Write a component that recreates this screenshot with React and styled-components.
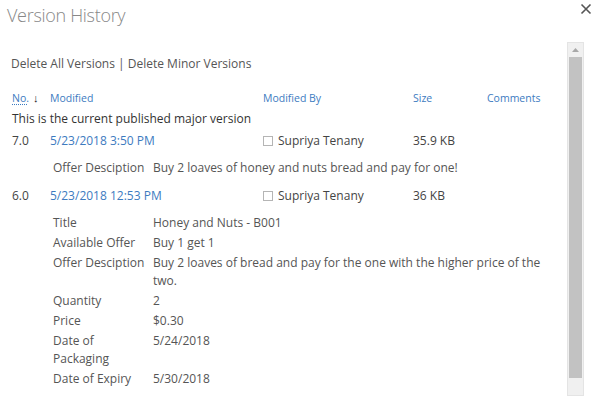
import React from "react";
import styled, { createGlobalStyle } from "styled-components";

const GlobalStyle = createGlobalStyle`
  html, body { margin: 0; padding: 0; background: #fff; }
  body { font-family: "Open Sans", "Liberation Sans", sans-serif; color: #444; }
`;

const versions = [
  {
    no: "7.0",
    date: "5/23/2018 3:50 PM",
    by: "Supriya Tenany",
    size: "35.9 KB",
    fields: [
      ["Offer Desciption", "Buy 2 loaves of honey and nuts bread and pay for one!"],
    ],
  },
  {
    no: "6.0",
    date: "5/23/2018 12:53 PM",
    by: "Supriya Tenany",
    size: "36 KB",
    fields: [
      ["Title", "Honey and Nuts - B001"],
      ["Available Offer", "Buy 1 get 1"],
      ["Offer Desciption", "Buy 2 loaves of bread and pay for the one with the higher price of the two."],
      ["Quantity", "2"],
      ["Price", "$0.30"],
      ["Date of Packaging", "5/24/2018"],
      ["Date of Expiry", "5/30/2018"],
    ],
  },
];

const Dialog = styled.div`
  width: 600px;
  height: 396px;
  display: flex;
  flex-direction: column;
  overflow: hidden;
`;

const Header = styled.div`
  height: 42px;
  display: flex;
  justify-content: space-between;
  align-items: flex-start;
  padding: 0 8px 0 7px;
`;

const Title = styled.h1`
  margin: 3px 0 0;
  font-size: 18px;
  font-weight: 300;
  color: #888;
  letter-spacing: -0.3px;
`;

const Close = styled.button`
  border: 0;
  background: none;
  padding: 0;
  margin-top: 3px;
  width: 12px;
  height: 12px;
  cursor: pointer;
  display: flex;
`;

const Body = styled.div`
  flex: 1;
  display: flex;
  min-height: 0;
`;

const Content = styled.div`
  flex: 1;
  padding: 13px 0 0 12px;
  font-size: 12px;
  line-height: 18px;
`;

const Actions = styled.div`
  color: #555;
  margin-left: -1px;
`;

const Grid = styled.div`
  display: grid;
  grid-template-columns: 38px 213px 150px 74px 1fr;
  align-items: start;
`;

const HeadCell = styled.div`
  color: #3d7bbf;
  font-size: 10.5px;
  margin-top: 16px;
  padding-bottom: 3px;
`;

const SortLink = styled.span`
  text-decoration: underline dotted;
  text-underline-offset: 2px;
`;

const Arrow = styled.span`
  color: #222;
  margin-left: 4px;
  font-size: 11px;
`;

const Note = styled.div`
  grid-column: 1 / -1;
  color: #333;
  padding-bottom: 3px;
`;

const Cell = styled.div`
  padding: 1px 0 4px;
  color: ${(p) => (p.link ? "#3d7bbf" : "#444")};
  display: flex;
  align-items: center;
  gap: 5px;
`;

const Box = styled.span`
  width: 8px;
  height: 8px;
  border: 1px solid #b5b5b5;
  display: inline-block;
`;

const Fields = styled.div`
  grid-column: 2 / 6;
  display: grid;
  grid-template-columns: 100px 395px;
  padding: 4px 0 8px 3px;
`;

const Label = styled.div`
  padding: 1px 8px 1px 0;
  color: #555;
`;

const Value = styled.div`
  padding: 1px 0;
  color: #555;
`;

const Scrollbar = styled.div`
  width: 15px;
  margin: 0 16px 0 0;
  background: #f0f0f0;
  border: 1px solid #e4e4e4;
  display: flex;
  flex-direction: column;
  align-items: center;
`;

const ScrollArrow = styled.div`
  height: 14px;
  display: flex;
  align-items: center;
  justify-content: center;
`;

const Thumb = styled.div`
  width: 13px;
  height: 321px;
  background: #c2c2c2;
`;

export default function App() {
  return (
    <Dialog>
      <GlobalStyle />
      <Header>
        <Title>Version History</Title>
        <Close aria-label="Close">
          <svg width="12" height="12" viewBox="0 0 12 12">
            <path d="M1.5 1.5 L10.5 10.5 M10.5 1.5 L1.5 10.5" stroke="#555" strokeWidth="1.6" />
          </svg>
        </Close>
      </Header>
      <Body>
        <Content>
          <Actions>Delete All Versions | Delete Minor Versions</Actions>
          <Grid>
            <HeadCell>
              <SortLink>No.</SortLink>
              <Arrow>↓</Arrow>
            </HeadCell>
            <HeadCell>Modified</HeadCell>
            <HeadCell>Modified By</HeadCell>
            <HeadCell>Size</HeadCell>
            <HeadCell>Comments</HeadCell>
            <Note>This is the current published major version</Note>
            {versions.map((v) => (
              <React.Fragment key={v.no}>
                <Cell>{v.no}</Cell>
                <Cell link>{v.date}</Cell>
                <Cell>
                  <Box />
                  {v.by}
                </Cell>
                <Cell>{v.size}</Cell>
                <Cell />
                <Fields>
                  {v.fields.map(([k, val]) => (
                    <React.Fragment key={k}>
                      <Label>{k}</Label>
                      <Value>{val}</Value>
                    </React.Fragment>
                  ))}
                </Fields>
              </React.Fragment>
            ))}
          </Grid>
        </Content>
        <Scrollbar>
          <ScrollArrow>
            <svg width="7" height="4" viewBox="0 0 7 4">
              <path d="M0 4 L3.5 0 L7 4 Z" fill="#a8a8a8" />
            </svg>
          </ScrollArrow>
          <Thumb />
        </Scrollbar>
      </Body>
    </Dialog>
  );
}
